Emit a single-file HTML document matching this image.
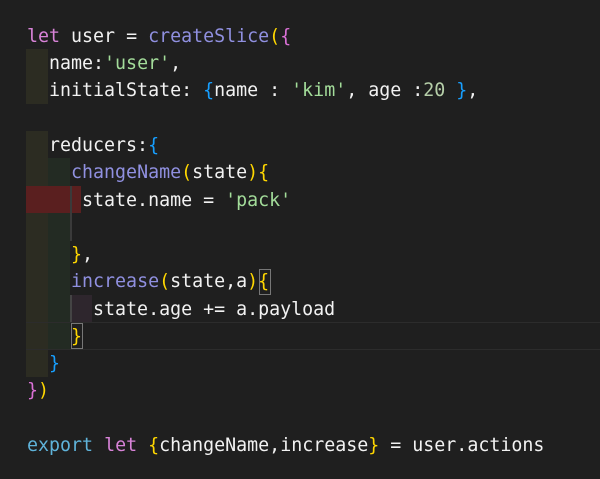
<!DOCTYPE html>
<html><head><style>
body{margin:0;width:600px;height:479px;background:#1f1f1f;overflow:hidden;position:relative;font-family:"DejaVu Sans Mono","Liberation Mono",monospace;font-size:18.3px;color:#f2f2f2}
.l{position:absolute;left:27px;height:27.3px;line-height:27.3px;white-space:pre;margin-top:1px}
.b{position:absolute}
.k{color:#5fb3da}.p{color:#d883d8}.f{color:#9090e0}.s{color:#a3dc9a}.n{color:#b5cea8}
.y{color:#ffd700}.m{color:#da70d6}.u{color:#179fff}
</style></head><body>
<div class="b" style="left:26px;top:49px;width:22px;height:55px;background:#2c2c22"></div>
<div class="b" style="left:26px;top:131px;width:22px;height:246px;background:#2c2c22"></div>
<div class="b" style="left:48px;top:158px;width:22px;height:192px;background:#232b23"></div>
<div class="b" style="left:26px;top:186px;width:55px;height:27px;background:#5a1f1f"></div>
<div class="b" style="left:70px;top:186px;width:2px;height:55px;background:#3a3a3a"></div>
<div class="b" style="left:70px;top:295px;width:22px;height:27px;background:#2e262d"></div>
<div class="b" style="left:70px;top:295px;width:2px;height:27px;background:#444"></div>
<div class="b" style="left:26px;top:322px;width:574px;height:26px;border-top:1px solid #2c2c2c;border-bottom:1px solid #2c2c2c"></div>
<div class="b" style="left:259px;top:269px;width:10px;height:24px;border:1px solid #777"></div>
<div class="b" style="left:71px;top:323px;width:10px;height:24px;border:1px solid #777"></div>
<div class="l" style="top:22px"><span class="p">let</span> user = <span class="f">createSlice</span><span class="y">(</span><span class="m">{</span></div>
<div class="l" style="top:49px">  name:<span class="s">'user'</span>,</div>
<div class="l" style="top:76px">  initialState: <span class="u">{</span>name : <span class="s">'kim'</span>, age :<span class="n">20</span> <span class="u">}</span>,</div>
<div class="l" style="top:131px">  reducers:<span class="u">{</span></div>
<div class="l" style="top:158px">    <span class="f">changeName</span><span class="y">(</span>state<span class="y">){</span></div>
<div class="l" style="top:186px">     state.name = <span class="s">'pack'</span></div>
<div class="l" style="top:240px">    <span class="y">}</span>,</div>
<div class="l" style="top:267px">    <span class="f">increase</span><span class="y">(</span>state,a<span class="y">){</span></div>
<div class="l" style="top:295px">      state.age += a.payload</div>
<div class="l" style="top:322px">    <span class="y">}</span></div>
<div class="l" style="top:349px">  <span class="u">}</span></div>
<div class="l" style="top:376px"><span class="m">}</span><span class="y">)</span></div>
<div class="l" style="top:431px"><span class="k">export</span> <span class="p">let</span> <span class="y">{</span>changeName,increase<span class="y">}</span> = user.actions</div>
</body></html>
